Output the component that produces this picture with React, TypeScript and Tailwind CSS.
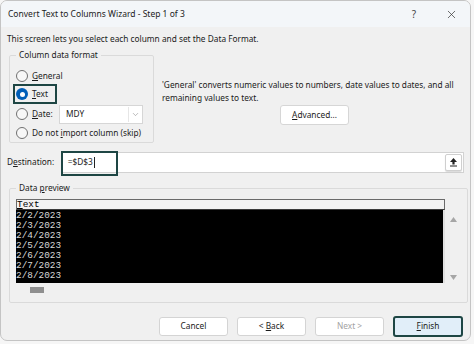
import { X, ChevronDown } from "lucide-react";

const dates = ["2/2/2023", "2/3/2023", "2/4/2023", "2/5/2023", "2/6/2023", "2/7/2023", "2/8/2023"];

function Radio({ checked, label }: { checked?: boolean; label: React.ReactNode }) {
  return (
    <div className="flex items-center gap-[4px] whitespace-nowrap">
      {checked ? (
        <span className="grid h-[12px] w-[12px] shrink-0 place-items-center rounded-full bg-[#005fb8]">
          <span className="h-[5px] w-[5px] rounded-full bg-white" />
        </span>
      ) : (
        <span className="h-[12px] w-[12px] shrink-0 rounded-full border border-[#707070] bg-[#f7f7f7]" />
      )}
      <span>{label}</span>
    </div>
  );
}

function Btn({ children, primary, disabled }: { children: React.ReactNode; primary?: boolean; disabled?: boolean }) {
  return (
    <div
      className={
        primary
          ? "grid h-[21px] w-[70px] place-items-center rounded-[3px] border-2 border-[#1e4644] bg-[#e1eef9]"
          : "grid h-[19px] w-[69px] place-items-center rounded-[3px] border border-[#d4d4d4] bg-white " +
            (disabled ? "text-[#a3a3a3]" : "")
      }
    >
      {children}
    </div>
  );
}

export default function App() {
  return (
    <div className="h-[344px] w-[474px] bg-[#f6f6f6] font-['Noto_Sans',sans-serif] text-[8.3px] text-[#1b1b1b]">
      <div className="flex h-[341px] w-[471px] flex-col overflow-hidden rounded-[7px] border border-[#c4c4c4] bg-[#f0f0f0]">
        <div className="flex h-[26px] shrink-0 items-center bg-[#f3f6f9] pl-[7px] pr-[12px] text-[8.5px]">
          <span className="flex-1">Convert Text to Columns Wizard - Step 1 of 3</span>
          <span className="mr-[29px] text-[10px] text-[#444]">?</span>
          <X className="h-[13px] w-[13px] text-[#333]" strokeWidth={1.3} />
        </div>

        <div className="px-[6px] pt-[6px]">
          <div className="leading-[12px]">This screen lets you select each column and set the Data Format.</div>

          <div className="mt-[4px] flex">
            <fieldset className="ml-[2px] h-[94px] w-[145px] shrink-0 rounded-[2px] border border-[#dadada] px-[6px]">
              <legend className="px-[3px] leading-[12px]">Column data format</legend>
              <div className="mt-[6px] flex flex-col">
                <div className="flex h-[18px] items-center">
                  <Radio label={<><u>G</u>eneral</>} />
                </div>
                <div className="-ml-[3px] -mt-[1px] flex h-[20px] w-[44px] items-center border-2 border-[#1e4644] pl-[1px]">
                  <Radio checked label={<><u>T</u>ext</>} />
                </div>
                <div className="flex h-[20px] items-center">
                  <div className="w-[43px]">
                    <Radio label={<><u>D</u>ate:</>} />
                  </div>
                  <div className="flex h-[19px] w-[84px] items-center border border-[#d6d6d6] bg-white pl-[6px]">
                    <span className="flex-1">MDY</span>
                    <span className="mr-[1px] grid h-[15px] w-[13px] place-items-center border-l border-[#e6e6e6]">
                      <ChevronDown className="h-[9px] w-[9px] text-[#888]" strokeWidth={1.5} />
                    </span>
                  </div>
                </div>
                <div className="flex h-[18px] items-center">
                  <Radio label={<>Do not <u>i</u>mport column (skip)</>} />
                </div>
              </div>
            </fieldset>

            <div className="ml-[8px] pt-[29px]">
              <div className="whitespace-nowrap leading-[13px]">
                'General' converts numeric values to numbers, date values to dates, and all
                <br />
                remaining values to text.
              </div>
              <div className="ml-[118px] mt-[1px] grid h-[20px] w-[69px] place-items-center rounded-[3px] border border-[#d6d6d6] bg-white">
                <span><u>A</u>dvanced...</span>
              </div>
            </div>
          </div>

          <div className="mt-[8px] flex h-[22px] items-center">
            <span className="w-[54px]">D<u>e</u>stination:</span>
            <div className="relative flex h-[21px] w-[406px] items-center border border-[#d2d2d2] bg-white pl-[6px]">
              <span>=$D$3</span>
              <span className="ml-[1px] h-[11px] w-[1px] bg-[#222]" />
              <div className="absolute -left-[1px] -top-[2px] h-[25px] w-[57px] border-2 border-[#1e4644]" />
              <div className="absolute right-[1px] top-[1px] grid h-[17px] w-[17px] place-items-center rounded-[2px] border border-[#cfcfcf] bg-white shadow-[0_1px_1px_rgba(0,0,0,0.15)]">
                <svg width="9" height="10" viewBox="0 0 9 10">
                  <path d="M4.5 1 L8 5 L5.6 5 L5.6 7.5 L3.4 7.5 L3.4 5 L1 5 Z" fill="#222" />
                  <rect x="1" y="8.5" width="7" height="1" fill="#222" />
                </svg>
              </div>
            </div>
          </div>

          <fieldset className="ml-[2px] mt-[9px] h-[121px] w-[459px] rounded-[2px] border border-[#dadada] px-[6px]">
            <legend className="px-[3px] leading-[12px]">Data <u>p</u>review</legend>
            <div className="mt-[5px] flex">
              <div className="w-[429px] font-['Liberation_Mono',monospace] text-[9.4px] leading-[10px]">
                <div className="h-[11px] border border-[#6a6a6a] border-b-[#3a3a3a] bg-[#f2f2f2] leading-[9px] text-black">
                  <span className="underline">T</span>ext
                </div>
                <div className="h-[73px] border-r-2 border-[#e0e0e0] bg-black pt-[1px] text-[#d8d8d8]">
                  {dates.map((d) => (
                    <div key={d}>{d}</div>
                  ))}
                </div>
              </div>
              <div className="flex w-[16px] flex-col items-center justify-between pb-[3px] pt-[18px]">
                <svg width="7" height="5" viewBox="0 0 7 5">
                  <path d="M0 5 L3.5 0 L7 5 Z" fill="#a6a6a6" />
                </svg>
                <svg width="7" height="5" viewBox="0 0 7 5">
                  <path d="M0 0 L3.5 5 L7 0 Z" fill="#a6a6a6" />
                </svg>
              </div>
            </div>
            <div className="ml-[14px] mt-[4px] h-[6px] w-[14px] bg-[#8f8f8f]" />
          </fieldset>

          <div className="mt-[13px] flex items-center justify-end gap-[9px] pr-[1px]">
            <Btn>Cancel</Btn>
            <Btn>
              <span>
                &lt; <u>B</u>ack
              </span>
            </Btn>
            <Btn disabled>Next &gt;</Btn>
            <Btn primary>
              <span>
                <u>F</u>inish
              </span>
            </Btn>
          </div>
        </div>
      </div>
    </div>
  );
}
